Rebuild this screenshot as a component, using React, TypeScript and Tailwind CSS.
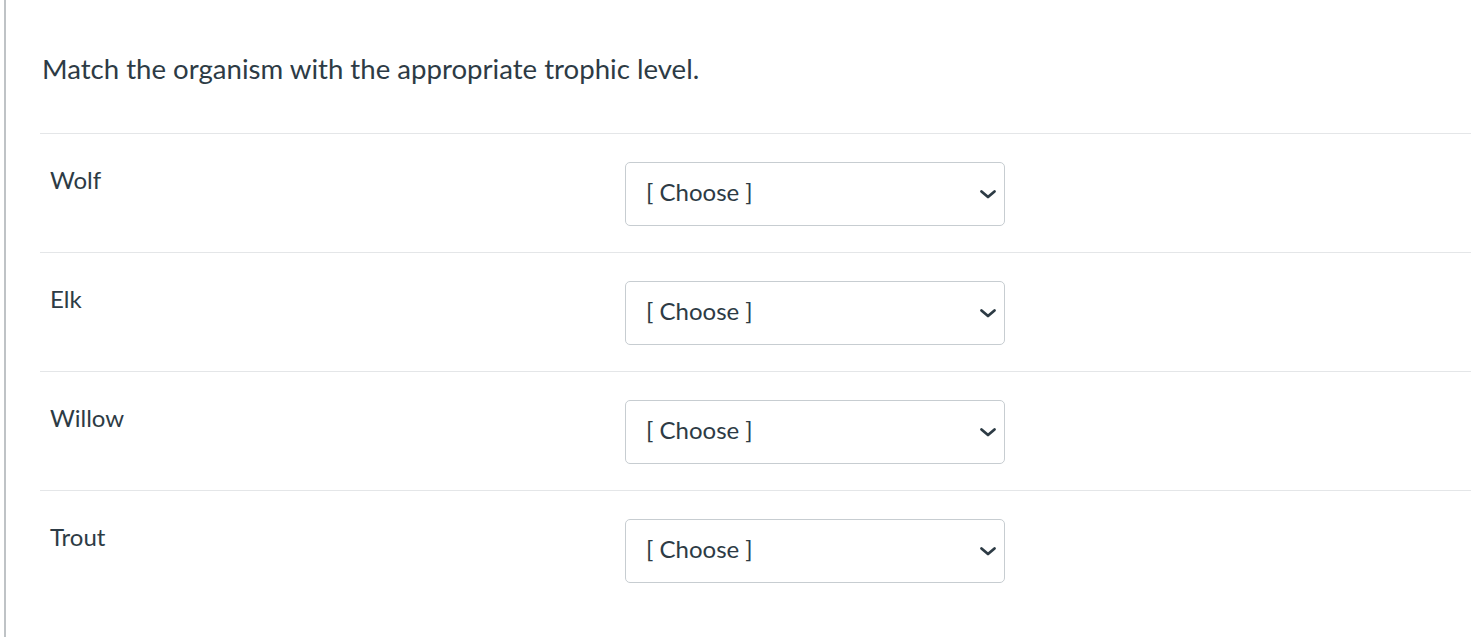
import React from "react";

const rows = ["Wolf", "Elk", "Willow", "Trout"];

function Chevron() {
  return (
    <svg width="18" height="10" viewBox="0 0 18 10" fill="none">
      <path d="M2.5 2.5l6.5 5.5 6.5-5.5" stroke="#2d3b45" strokeWidth="2.8" strokeLinecap="round" strokeLinejoin="round" />
    </svg>
  );
}

export default function App() {
  return (
    <div className="w-full h-[637px] bg-white flex" style={{ fontFamily: "Lato, 'Open Sans', sans-serif" }}>
      <div className="w-[4px] shrink-0" />
      <div className="w-[2px] shrink-0 bg-[#bfc3c6]" />
      <div className="flex-1 pl-[34px] pt-[51px]">
        <div className="pl-[2px] text-[27.6px] leading-[36px] text-[#2d3b45] h-[82px]">
          Match the organism with the appropriate trophic level.
        </div>
        {rows.map((r) => (
          <div key={r} className="border-t border-[#e4e6e8] h-[119px] flex items-start">
            <div className="w-[585px] pl-[10px] pt-[32px] text-[24px] leading-[28px] text-[#2d3b45]">{r}</div>
            <div className="mt-[28px] w-[380px] h-[64px] border border-[#c7cdd1] rounded-[5px] flex items-center justify-between pl-[20px] pr-[7px]">
              <span className="text-[24px] leading-[30px] text-[#2d3b45] -translate-y-[2px]">[ Choose ]</span>
              <Chevron />
            </div>
          </div>
        ))}
      </div>
    </div>
  );
}
